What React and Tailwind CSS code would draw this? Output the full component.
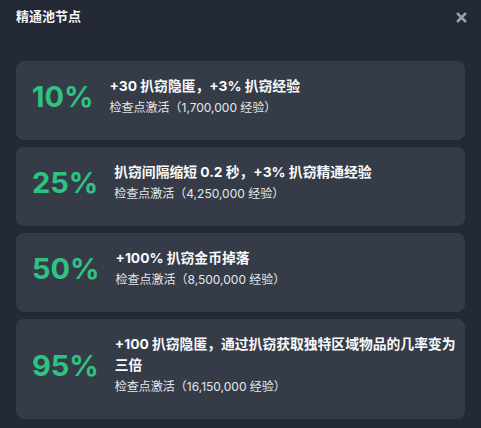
import React from 'react';
import { X } from 'lucide-react';

const nodes = [
  { pct: '10%', title: '+30 扒窃隐匿，+3% 扒窃经验', sub: '检查点激活（1,700,000 经验）' },
  { pct: '25%', title: '扒窃间隔缩短 0.2 秒，+3% 扒窃精通经验', sub: '检查点激活（4,250,000 经验）' },
  { pct: '50%', title: '+100% 扒窃金币掉落', sub: '检查点激活（8,500,000 经验）' },
  { pct: '95%', title: '+100 扒窃隐匿，通过扒窃获取独特区域物品的几率变为三倍', sub: '检查点激活（16,150,000 经验）' },
];

export default function App() {
  return (
    <div
      className="w-[481px] h-[428px] bg-[#232935] text-white overflow-hidden"
      style={{ fontFamily: 'Inter, "Noto Sans CJK SC", sans-serif' }}
    >
      {/* Header */}
      <div className="flex items-center justify-between h-[34px] pl-4 pr-3">
        <h2 className="text-[13px] font-bold text-gray-100">精通池节点</h2>
        <X size={15} strokeWidth={4} className="text-gray-400" />
      </div>

      {/* Nodes */}
      <div className="flex flex-col gap-[7px] px-4 pt-[27px]">
        {nodes.map(n => (
          <div key={n.pct} className="flex items-center gap-[16px] bg-[#353c48] rounded-lg pl-4 pr-1 pt-[15px] pb-[23px] min-h-[79px]">
            <div className="text-[29px] font-bold text-[#30c282] leading-none shrink-0">{n.pct}</div>
            <div className="flex flex-col">
              <div className="text-[13.8px] font-bold leading-[21px] text-gray-50">{n.title}</div>
              <div className="text-[12px] leading-[19px] text-gray-200 mt-[1px]">{n.sub}</div>
            </div>
          </div>
        ))}
      </div>
    </div>
  );
}
